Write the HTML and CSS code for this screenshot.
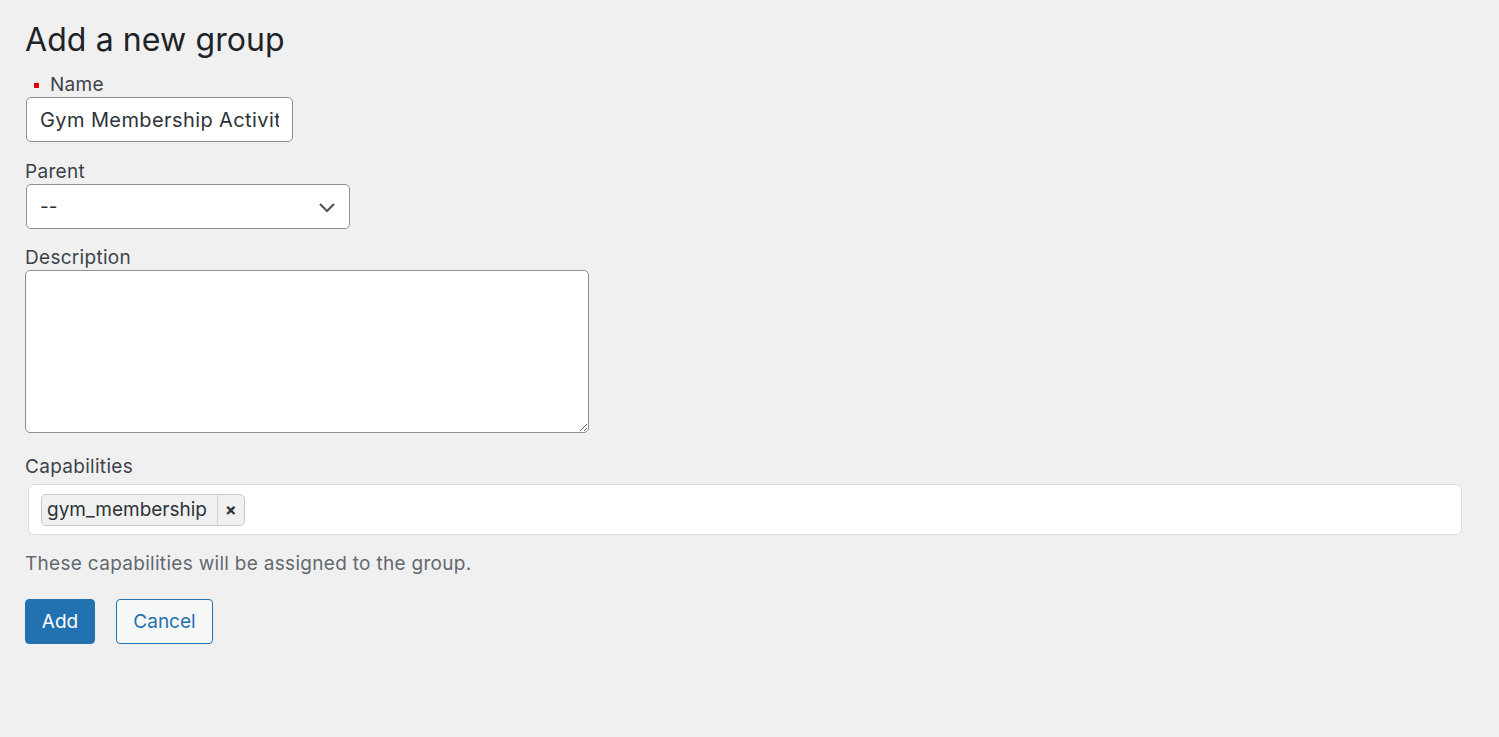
FILE: index.html
```html
<!DOCTYPE html>
<html>
<head>
<meta charset="utf-8">
<link rel="stylesheet" href="styles.css">
</head>
<body>
<div class="wrap">
  <h1 class="title">Add a new group</h1>
  <form class="form">
    <div class="field field-name">
      <label class="label"><span class="req"></span>Name</label>
      <input class="input input-name" type="text" value="Gym Membership Activities">
    </div>
    <div class="field">
      <label class="label">Parent</label>
      <div class="select">
        <span class="select-value">--</span>
        <svg class="chev" width="18" height="12" viewBox="0 0 18 12"><path d="M2 3 L9 10 L16 3" fill="none" stroke="#50575e" stroke-width="2.2"/></svg>
      </div>
    </div>
    <div class="field">
      <label class="label">Description</label>
      <textarea class="textarea"></textarea>
    </div>
    <div class="field field-caps">
      <label class="label">Capabilities</label>
      <div class="tokens">
        <span class="token"><span class="token-text">gym_membership</span><span class="token-x">×</span></span>
      </div>
      <p class="help">These capabilities will be assigned to the group.</p>
    </div>
    <div class="actions">
      <button type="button" class="btn btn-primary">Add</button>
      <button type="button" class="btn btn-secondary">Cancel</button>
    </div>
  </form>
</div>
</body>
</html>
```

FILE: styles.css
```css
html, body {
  margin: 0;
  padding: 0;
  background: #f0f0f1;
}
body {
  font-family: Inter, "Noto Sans", "Liberation Sans", sans-serif;
  color: #3c434a;
  font-size: 19px;
}
.wrap {
  padding: 20px 25px 0 25px;
}
.title {
  margin: 0;
  font-size: 32px;
  font-weight: 400;
  line-height: 40px;
  color: #1d2327;
  letter-spacing: 0.1px;
}
.form {
  display: flex;
  flex-direction: column;
  margin-top: 13px;
}
.field {
  display: flex;
  flex-direction: column;
  align-items: flex-start;
  margin-bottom: 17px;
}
.field-name {
  margin-bottom: 18px;
}
.label {
  display: flex;
  align-items: center;
  font-size: 19px;
  line-height: 24px;
  letter-spacing: 0.3px;
  color: #3c434a;
}
.req {
  width: 5px;
  height: 5px;
  background: #e00000;
  margin: 0 11px 0 9px;
}
.input {
  box-sizing: border-box;
  width: 267px;
  height: 45px;
  margin-left: 1px;
  border: 1px solid #8c8f94;
  border-radius: 5px;
  background: #fff;
  padding: 0 13px;
  font-family: inherit;
  font-size: 20px;
  letter-spacing: 0.4px;
  color: #2c3338;
  outline: none;
}
.select {
  box-sizing: border-box;
  width: 324px;
  height: 45px;
  margin-left: 1px;
  border: 1px solid #8c8f94;
  border-radius: 5px;
  background: #fff;
  display: flex;
  align-items: center;
  justify-content: space-between;
  padding: 0 13px 0 13px;
  font-size: 19px;
  color: #2c3338;
}
.chev {
  display: block;
}
.textarea {
  box-sizing: border-box;
  display: block;
  width: 564px;
  height: 163px;
  border: 1px solid #8c8f94;
  border-radius: 5px;
  background: #fff;
  margin: 0 0 5px 0;
  font-family: inherit;
  font-size: 18px;
  outline: none;
}
.field-caps {
  align-items: stretch;
  margin-bottom: 0;
}
.tokens {
  box-sizing: border-box;
  margin: 5px 12px 0 3px;
  height: 51px;
  background: #fff;
  border: 1px solid #dcdcde;
  border-radius: 6px;
  display: flex;
  align-items: center;
  padding: 0 12px;
}
.token {
  display: flex;
  align-items: stretch;
  height: 32px;
  box-sizing: border-box;
  background: #f0f0f1;
  border: 1px solid #c8c8ca;
  border-radius: 5px;
  font-size: 19px;
  color: #2c3338;
}
.token-text {
  display: flex;
  align-items: center;
  padding: 0 10px 0 5px;
  border-right: 1px solid #d5d5d7;
}
.token-x {
  display: flex;
  align-items: center;
  padding: 0 7px 0 7px;
  font-size: 17px;
  font-weight: 700;
  color: #2c3338;
}
.help {
  margin: 17px 0 0 0;
  font-size: 19px;
  line-height: 24px;
  letter-spacing: 0.3px;
  color: #646970;
}
.actions {
  display: flex;
  gap: 21px;
  margin-top: 23px;
}
.btn {
  box-sizing: border-box;
  height: 45px;
  border-radius: 4px;
  font-family: inherit;
  font-size: 19px;
  padding: 0;
  cursor: pointer;
}
.btn-primary {
  width: 70px;
  background: #2271b1;
  border: 1px solid #2271b1;
  color: #fff;
}
.btn-secondary {
  width: 97px;
  background: #f6f7f7;
  border: 1px solid #2271b1;
  color: #2271b1;
}
```
